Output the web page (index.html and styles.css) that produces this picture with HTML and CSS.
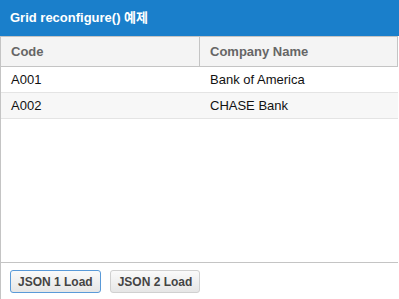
FILE: index.html
```html
<!DOCTYPE html>
<html>
<head>
<meta charset="utf-8">
<link rel="stylesheet" href="styles.css">
</head>
<body>
<div class="titlebar">Grid reconfigure() 예제</div>
<div class="grid">
  <div class="row head">
    <div class="cell c1">Code</div>
    <div class="cell c2">Company Name</div>
  </div>
  <div class="row">
    <div class="cell c1">A001</div>
    <div class="cell c2">Bank of America</div>
  </div>
  <div class="row alt">
    <div class="cell c1">A002</div>
    <div class="cell c2">CHASE Bank</div>
  </div>
  <div class="fill"></div>
</div>
<div class="toolbar">
  <button class="btn focus">JSON 1 Load</button>
  <button class="btn">JSON 2 Load</button>
</div>
</body>
</html>
```
FILE: styles.css
```css
html, body {
  margin: 0;
  padding: 0;
  background: #fff;
  font-family: "Liberation Sans", Arial, "Noto Sans CJK KR", sans-serif;
  font-size: 13px;
  width: 399px;
  height: 299px;
  overflow: hidden;
}
.titlebar {
  height: 36px;
  box-sizing: border-box;
  background: #1a7fcb;
  color: #fff;
  font-weight: bold;
  font-size: 13px;
  line-height: 36px;
  padding-left: 10px;
}
.grid {
  width: 398px;
  height: 227px;
  box-sizing: border-box;
  border-left: 1px solid #c4c4c4;
  border-bottom: 1px solid #c4c4c4;
  display: flex;
  flex-direction: column;
}
.row {
  display: flex;
  height: 26px;
  box-sizing: border-box;
  border-bottom: 1px solid #e4e4e4;
  background: #fff;
}
.row.alt { background: #f7f7f7; }
.row.head {
  height: 31px;
  background: #f4f4f4;
  border-top: 1px solid #c4c4c4;
  border-bottom: 1px solid #c4c4c4;
  border-right: 1px solid #c4c4c4;
  color: #666;
  font-weight: bold;
}
.cell {
  display: flex;
  align-items: center;
  padding-left: 10px;
  box-sizing: border-box;
  color: #111;
}
.head .cell { color: #666; }
.c1 { width: 199px; }
.head .c1 { border-right: 1px solid #c4c4c4; }
.c2 { flex: 1; }
.fill { flex: 1; }
.toolbar {
  display: flex;
  gap: 9px;
  padding: 7px 0 0 10px;
  border-left: 1px solid #c4c4c4;
  height: 36px;
  box-sizing: border-box;
}
.btn {
  height: 23px;
  box-sizing: border-box;
  padding: 0 7px;
  font-family: "Liberation Sans", Arial, sans-serif;
  font-size: 12px;
  font-weight: bold;
  color: #444;
  background: linear-gradient(#fafafa, #e6e6e6);
  border: 1px solid #d0d0d0;
  border-radius: 3px;
}
.btn.focus {
  border-color: #5a9ad8;
}
.toolbar .btn:first-child { margin-left: -1px; }
```
